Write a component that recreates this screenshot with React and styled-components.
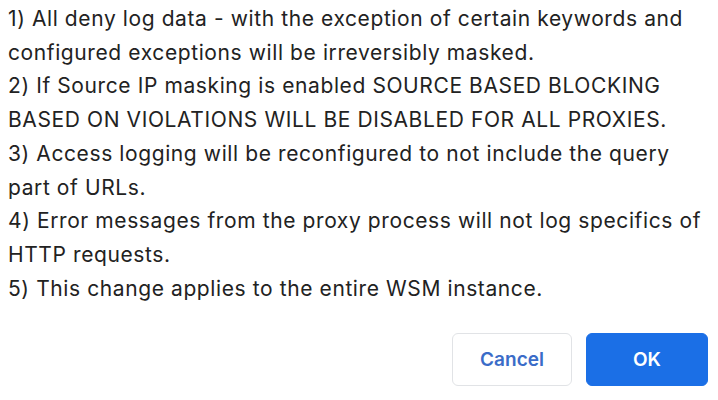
import React from 'react'
import styled, { createGlobalStyle } from 'styled-components'

const Global = createGlobalStyle`
  html, body { margin: 0; padding: 0; background: #ffffff; }
  body { font-family: Inter, "Noto Sans", sans-serif; }
`

const Dialog = styled.div`
  width: 718px;
  height: 400px;
  box-sizing: border-box;
  padding: 0 10px 14px 8px;
  display: flex;
  flex-direction: column;
  background: #fff;
`

const Message = styled.div`
  color: #222;
  font-size: 21px;
  line-height: 33.7px;
  letter-spacing: 0.6px;
  margin-top: 2px;
`

const Line = styled.div`
  white-space: nowrap;
`

const Actions = styled.div`
  margin-top: auto;
  display: flex;
  justify-content: flex-end;
  gap: 14px;
`

const Button = styled.button`
  width: ${p => (p.$primary ? '122px' : '120px')};
  height: 53px;
  border-radius: 6px;
  font-family: Inter, "Noto Sans", sans-serif;
  font-size: 19px;
  font-weight: 600;
  border: 1px solid ${p => (p.$primary ? '#1b6fe6' : '#e1e3e6')};
  background: ${p => (p.$primary ? '#1b6fe6' : '#fff')};
  color: ${p => (p.$primary ? '#fff' : '#3a6cc8')};
`

const lines = [
  '1) All deny log data - with the exception of certain keywords and',
  'configured exceptions will be irreversibly masked.',
  '2) If Source IP masking is enabled SOURCE BASED BLOCKING',
  'BASED ON VIOLATIONS WILL BE DISABLED FOR ALL PROXIES.',
  '3) Access logging will be reconfigured to not include the query',
  'part of URLs.',
  '4) Error messages from the proxy process will not log specifics of',
  'HTTP requests.',
  '5) This change applies to the entire WSM instance.',
]

export default function App() {
  return (
    <>
      <Global />
      <Dialog>
        <Message>
          {lines.map(l => (
            <Line key={l}>{l}</Line>
          ))}
        </Message>
        <Actions>
          <Button>Cancel</Button>
          <Button $primary>OK</Button>
        </Actions>
      </Dialog>
    </>
  )
}
